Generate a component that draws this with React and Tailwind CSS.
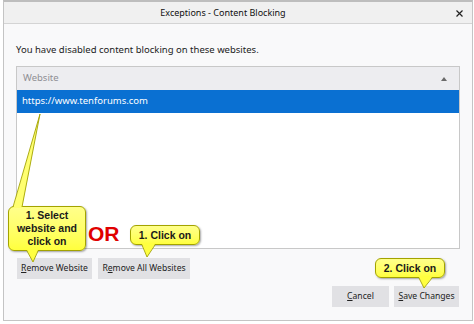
import React from 'react';

const Callout = ({ className, children }) => (
  <div
    className={`absolute rounded-[6px] border border-[#a3a300] bg-linear-to-b from-[#ffff8a] to-[#ffff3c] shadow-[1px_1px_2px_rgba(0,0,0,0.35)] flex flex-col items-center justify-center text-center font-['Liberation_Sans',Arial,sans-serif] font-bold text-[10.5px] leading-[13px] text-[#1a1a1a] ${className}`}
  >
    {children}
  </div>
);

const Btn = ({ className, children }) => (
  <button className={`h-[21px] bg-[#e1e1e4] text-[8.6px] text-[#222] flex items-center justify-center ${className}`}>
    {children}
  </button>
);

export default function App() {
  return (
    <div className="relative w-[474px] h-[324px] bg-white overflow-hidden font-['Noto_Sans',sans-serif]">
      <div className="ml-[3px] w-[470px] h-[321px] border border-[#c4c4c4] border-t-2 border-t-[#bdbdbd] bg-[#f9f9fa] flex flex-col">
        {/* title bar */}
        <div className="relative h-[22px] shrink-0 bg-[#f0f0f0] border-b border-[#d4d4d4] flex items-center justify-center pr-[30px]">
          <span className="text-[9px] text-[#111]">Exceptions - Content Blocking</span>
          <svg className="absolute right-[9px] top-[8px]" width="7" height="7" viewBox="0 0 7 7">
            <path d="M0.5 0.5 L6.5 6.5 M6.5 0.5 L0.5 6.5" stroke="#222" strokeWidth="1.2" />
          </svg>
        </div>

        <div className="flex-1 flex flex-col px-[12px] pt-[20px] pb-[12px]">
          <p className="text-[9.5px] leading-[12px] text-[#222]">You have disabled content blocking on these websites.</p>

          {/* list */}
          <div className="mt-[10px] h-[183px] border border-[#c8c8c8] bg-white flex flex-col">
            <div className="h-[23px] bg-[#ededf0] flex items-center justify-between px-[6px]">
              <span className="text-[9.5px] text-[#8f8f94]">Website</span>
              <svg width="6" height="4" viewBox="0 0 6 4" className="mr-[6px]">
                <path d="M0 4 L3 0 L6 4 Z" fill="#6a6a6a" />
              </svg>
            </div>
            <div className="h-[23px] bg-[#0a70d2] flex items-center px-[5px]">
              <span className="text-[9.5px] text-white">https://www.tenforums.com</span>
            </div>
          </div>

          <div className="mt-[9px] flex gap-[6px] pl-[1px]">
            <Btn className="w-[75px]"><span><u>R</u>emove Website</span></Btn>
            <Btn className="w-[92px]"><span>R<u>e</u>move All Websites</span></Btn>
          </div>

          <div className="mt-[7px] flex justify-end gap-[5px] pr-[1px]">
            <Btn className="w-[57px]"><span><u>C</u>ancel</span></Btn>
            <Btn className="w-[65px]"><span><u>S</u>ave Changes</span></Btn>
          </div>
        </div>
      </div>

      {/* annotations */}
      <span className="absolute left-[88px] top-[222px] font-['Liberation_Sans',Arial,sans-serif] font-bold text-[21px] leading-[24px] text-[#e00000]">OR</span>

      <Callout className="left-[8px] top-[206px] w-[78px] h-[45px]">
        <span>1. Select</span>
        <span>website and</span>
        <span>click on</span>
      </Callout>
      <Callout className="left-[130px] top-[225px] w-[70px] h-[20px]">1. Click on</Callout>
      <Callout className="left-[375px] top-[258px] w-[70px] h-[20px]">2. Click on</Callout>

      <svg className="absolute inset-0 pointer-events-none" width="474" height="324" viewBox="0 0 474 324">
        {/* long tail to selected row */}
        <polygon points="13,208 40,114 22,208" fill="#ffff70" />
        <polyline points="13,207 40,114 22,207" fill="none" stroke="#a3a300" strokeWidth="0.9" />
        {/* tail down to Remove Website */}
        <polygon points="27,250 33,262 38,250" fill="#ffff40" />
        <polyline points="27,251 33,262 38,251" fill="none" stroke="#a3a300" strokeWidth="0.9" />
        {/* tail to Remove All Websites */}
        <polygon points="142,244 147,257 155,244" fill="#ffff40" />
        <polyline points="142,245 147,257 155,245" fill="none" stroke="#a3a300" strokeWidth="0.9" />
        {/* tail to Save Changes */}
        <polygon points="419,277 424,288 432,277" fill="#ffff40" />
        <polyline points="419,278 424,288 432,278" fill="none" stroke="#a3a300" strokeWidth="0.9" />
      </svg>
    </div>
  );
}
